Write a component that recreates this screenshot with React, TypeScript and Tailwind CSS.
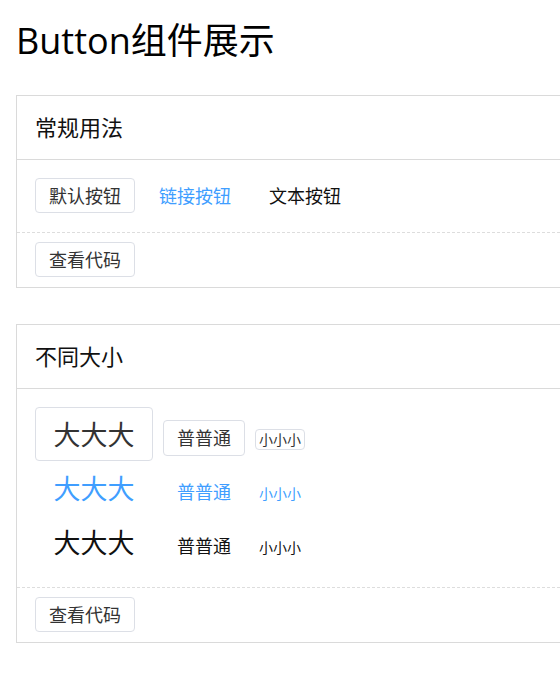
import { ReactNode } from "react";

type Variant = "default" | "link" | "text";
type Size = "large" | "normal" | "small";

const variants: Record<Variant, string> = {
  default: "border-[#dcdfe6] text-[#333]",
  link: "border-transparent text-[#409eff]",
  text: "border-transparent text-[#111]",
};

const sizes: Record<Size, string> = {
  large: "h-[54px] w-[118px] text-[27px]",
  normal: "h-[36px] px-[13px] text-[18px]",
  small: "h-[21px] px-[3px] text-[14px]",
};

function Button({
  variant = "default",
  size = "normal",
  children,
}: {
  variant?: Variant;
  size?: Size;
  children: ReactNode;
}) {
  return (
    <button
      className={`inline-flex items-center justify-center whitespace-nowrap rounded-[4px] border bg-white leading-none ${variants[variant]} ${sizes[size]}`}
    >
      {children}
    </button>
  );
}

function DemoCard({ title, children }: { title: string; children: ReactNode }) {
  return (
    <section className="w-[640px] border border-[#dadada] bg-white">
      <div className="flex h-[64px] items-center border-b border-[#dadada] px-[18px] text-[22px] text-[#111]">
        {title}
      </div>
      {children}
      <div className="border-t border-dashed border-[#dddddd] px-[18px] pt-[9px] pb-[10px]">
        <button className="inline-flex h-[35px] w-[100px] items-center justify-center rounded-[4px] border border-[#dcdfe6] bg-white text-[18px] leading-none text-[#333]">
          查看代码
        </button>
      </div>
    </section>
  );
}

export default function App() {
  return (
    <div
      className="min-h-screen w-full overflow-hidden bg-white px-4 text-black"
      style={{ fontFamily: '"Open Sans", "Noto Sans CJK SC", sans-serif' }}
    >
      <h1 className="mt-[19px] mb-[32px] text-[36px] font-normal leading-[44px]">Button组件展示</h1>

      <DemoCard title="常规用法">
        <div className="flex items-center gap-[10px] px-[18px] pt-[18px] pb-[19px]">
          <button className="inline-flex h-[35px] w-[100px] items-center justify-center rounded-[4px] border border-[#dcdfe6] bg-white text-[18px] leading-none text-[#333]">
            默认按钮
          </button>
          <button className="inline-flex h-[35px] w-[100px] items-center justify-center border border-transparent text-[18px] leading-none text-[#409eff]">
            链接按钮
          </button>
          <button className="inline-flex h-[35px] w-[100px] items-center justify-center border border-transparent text-[18px] leading-none text-[#111]">
            文本按钮
          </button>
        </div>
      </DemoCard>

      <div className="h-[36px]" />

      <DemoCard title="不同大小">
        <div className="flex flex-col px-[18px] py-[18px]">
          {(["default", "link", "text"] as Variant[]).map((v) => (
            <div key={v} className="flex h-[54px] items-baseline gap-[10px]">
              <Button variant={v} size="large">大大大</Button>
              <Button variant={v} size="normal">普普通</Button>
              <Button variant={v} size="small">小小小</Button>
            </div>
          ))}
        </div>
      </DemoCard>
    </div>
  );
}
